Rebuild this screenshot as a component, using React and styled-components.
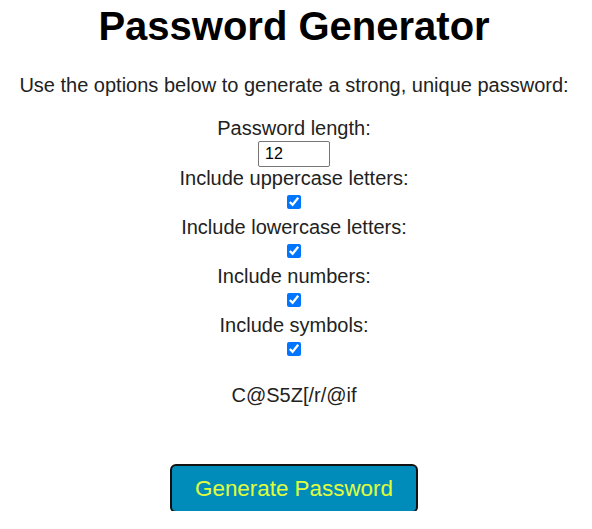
import styled, { createGlobalStyle } from "styled-components";
import { useState } from "react";

const CHARSETS = {
  upper: 'ABCDEFGHIJKLMNOPQRSTUVWXYZ',
  lower: 'abcdefghijklmnopqrstuvwxyz',
  numbers: '0123456789',
  symbols: '!@#$%^&*()[]{}/\\<>?-_=+',
};

const options = [
  { key: 'upper', label: 'Include uppercase letters:' },
  { key: 'lower', label: 'Include lowercase letters:' },
  { key: 'numbers', label: 'Include numbers:' },
  { key: 'symbols', label: 'Include symbols:' },
];

const GlobalStyle = createGlobalStyle`
  html, body {
    margin: 0;
    background: #fff;
  }

  body {
    font-family: "Liberation Sans", Arial, sans-serif;
  }
`;

const Page = styled.div`
  height: 511px;
  overflow: hidden;
  padding: 3px 4px 0 0;
  box-sizing: border-box;
  text-align: center;
  color: #222;
`;

const Title = styled.h1`
  margin: 0;
  font-size: 40px;
  line-height: 46px;
  font-weight: 700;
  color: #000;
`;

const Intro = styled.p`
  margin: 25px 0 20px;
  font-size: 20px;
  line-height: 23px;
`;

const Field = styled.div`
  display: flex;
  flex-direction: column;
  align-items: center;
`;

const Label = styled.label`
  display: block;
  font-size: 20px;
  line-height: 23px;
`;

const LengthInput = styled.input`
  box-sizing: border-box;
  width: 72px;
  height: 26px;
  margin: 1px 0 0;
  padding: 0 6px;
  border: 1px solid #767676;
  border-radius: 2px;
  font-family: "Liberation Sans", Arial, sans-serif;
  font-size: 16px;
  color: #000;
  outline: none;
`;

const CheckRow = styled.div`
  display: flex;
  justify-content: center;
  padding: 5px 0 7px;
`;

const Checkbox = styled.input`
  width: 14px;
  height: 14px;
  margin: 0;
`;

const Output = styled.p`
  margin: 21px 0 0;
  font-size: 20px;
  line-height: 23px;
  min-height: 23px;
`;

const GenerateButton = styled.button`
  height: 49px;
  margin-top: 57px;
  padding: 0 23px;
  border: 2px solid #111;
  border-radius: 6px;
  background-color: #008cba;
  color: #e2ff3c;
  font-family: "Liberation Sans", Arial, sans-serif;
  font-size: 22.4px;
  cursor: pointer;
`;

const makePassword = (length, flags) => {
  const pool = Object.keys(CHARSETS)
    .filter(key => flags[key])
    .map(key => CHARSETS[key])
    .join('');
  if (!pool) return '';

  let result = '';
  for (let i = 0; i < length; i++) {
    result += pool[Math.floor(Math.random() * pool.length)];
  }
  return result;
};

const App = () => {
  const [length, setLength] = useState(12);
  const [flags, setFlags] = useState({ upper: true, lower: true, numbers: true, symbols: true });
  const [password, setPassword] = useState('C@S5Z[/r/@if');

  const handleToggle = (key) => {
    setFlags({ ...flags, [key]: !flags[key] });
  };

  const handleGenerate = () => {
    setPassword(makePassword(length, flags));
  };

  return (
    <Page>
      <GlobalStyle />
      <Title>Password Generator</Title>
      <Intro>Use the options below to generate a strong, unique password:</Intro>
      <Field>
        <Label htmlFor="length">Password length:</Label>
        <LengthInput
          id="length"
          type="text"
          value={length}
          onChange={e => setLength(Number(e.target.value) || 0)}
        />
      </Field>
      {options.map(option =>
        <Field key={option.key}>
          <Label htmlFor={option.key}>{option.label}</Label>
          <CheckRow>
            <Checkbox
              id={option.key}
              type="checkbox"
              checked={flags[option.key]}
              onChange={() => handleToggle(option.key)}
            />
          </CheckRow>
        </Field>
      )}
      <Output>{password}</Output>
      <GenerateButton onClick={handleGenerate}>Generate Password</GenerateButton>
    </Page>
  );
};

export default App;
